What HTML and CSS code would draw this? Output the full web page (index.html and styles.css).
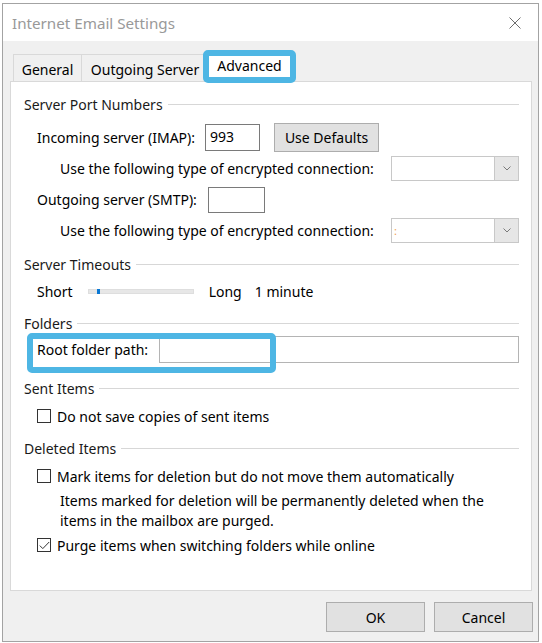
FILE: index.html
```html
<!DOCTYPE html>
<html lang="en">
<head>
    <meta charset="UTF-8">
    <title>Internet Email Settings</title>
    <link rel="stylesheet" href="styles.css">
</head>
<body>
    <div class="dialog">
        <!-- Title bar -->
        <div class="titlebar">
            <span class="title">Internet Email Settings</span>
            <svg class="close" width="12" height="12" viewBox="0 0 12 12">
                <path d="M0.5 0.5 L11.5 11.5 M11.5 0.5 L0.5 11.5" stroke="#6e6e6e" stroke-width="1" fill="none"/>
            </svg>
        </div>

        <!-- Tabs -->
        <div class="tabs">
            <div class="tab tab-general">General</div>
            <div class="tab tab-outgoing">Outgoing Server</div>
            <div class="tab tab-advanced active">Advanced<span class="callout"></span></div>
        </div>

        <div class="panel">
            <div class="group ports">
                <div class="group-title">Server Port Numbers</div>
                <div class="row">
                    <span>Incoming server (IMAP):</span>
                    <div class="text-input port-in">993</div>
                    <div class="btn btn-defaults">Use Defaults</div>
                </div>
                <div class="row sub">
                    <span>Use the following type of encrypted connection:</span>
                    <div class="combo"><span class="combo-value"></span><span class="combo-arrow"><svg width="8" height="5" viewBox="0 0 8 5"><path d="M0.5 0.5 L4 4 L7.5 0.5" stroke="#7a7a7a" fill="none"/></svg></span></div>
                </div>
                <div class="row">
                    <span>Outgoing server (SMTP):</span>
                    <div class="text-input port-out"></div>
                </div>
                <div class="row sub">
                    <span>Use the following type of encrypted connection:</span>
                    <div class="combo"><span class="combo-value"><span class="caret-mark">:</span></span><span class="combo-arrow"><svg width="8" height="5" viewBox="0 0 8 5"><path d="M0.5 0.5 L4 4 L7.5 0.5" stroke="#7a7a7a" fill="none"/></svg></span></div>
                </div>
            </div>

            <div class="group">
                <div class="group-title">Server Timeouts</div>
                <div class="row timeout-row">
                    <span>Short</span>
                    <div class="slider"><span class="slider-thumb"></span></div>
                    <span>Long</span>
                    <span class="timeout-value">1 minute</span>
                </div>
            </div>

            <div class="group">
                <div class="group-title">Folders</div>
                <div class="row root-row">
                    <span>Root folder path:</span>
                    <div class="text-input root-input"></div>
                    <span class="callout root-callout"></span>
                </div>
            </div>

            <div class="group sent">
                <div class="group-title">Sent Items</div>
                <label class="row check-row">
                    <span class="checkbox"></span>
                    <span>Do not save copies of sent items</span>
                </label>
            </div>

            <div class="group">
                <div class="group-title">Deleted Items</div>
                <label class="row check-row">
                    <span class="checkbox"></span>
                    <span>Mark items for deletion but do not move them automatically</span>
                </label>
                <p class="note">Items marked for deletion will be permanently deleted when the<br>items in the mailbox are purged.</p>
                <label class="row check-row">
                    <span class="checkbox checked"><svg width="11" height="9" viewBox="0 0 11 9"><path d="M0.8 4.6 L3.8 7.6 L10.2 1" stroke="#333" stroke-width="1" fill="none"/></svg></span>
                    <span>Purge items when switching folders while online</span>
                </label>
            </div>
        </div>

        <!-- Footer buttons -->
        <div class="footer">
            <div class="btn btn-footer">OK</div>
            <div class="btn btn-footer">Cancel</div>
        </div>
    </div>
</body>
</html>
```
FILE: styles.css
```css
* {margin: 0; padding: 0; box-sizing: border-box;}
body {font-family: "Noto Sans", sans-serif; font-size: 14px; color: #000; background: #fff;}

/* Dialog frame */
.dialog {margin: 3px 0 0 2px; width: 537px; height: 639px; border: 1px solid #a3a3a3; background: #f0f0f0; display: flex; flex-direction: column;}
.titlebar {height: 37px; flex-shrink: 0; background: #fff; display: flex; align-items: center; justify-content: space-between; padding: 0 17px 0 9px;}
.title {font-size: 15.2px; color: #999;}

/* Tabs */
.tabs {display: flex; align-items: flex-end; height: 27px; margin: 13px 0 0 10px; position: relative; z-index: 1;}
.tab {height: 27px; display: flex; align-items: center; justify-content: center; padding-top: 2px; border: 1px solid #d9d9d9; border-bottom: none; background: #f0f0f0; color: #000;}
.tab + .tab {border-left: none;}
.tab-general {width: 69px;}
.tab-outgoing {width: 127px;}
.tab-advanced {width: 82px; height: 30px; margin-bottom: -1px; padding: 0 0 4px 0; background: #fff; position: relative;}
.callout {position: absolute; border: 6px solid #4eb6e4; border-radius: 5px; pointer-events: none;}
.tab-advanced .callout {top: -3px; left: -6px; right: -6px; bottom: -1px;}

/* Tab panel */
.panel {height: 510px; flex-shrink: 0; margin: 0 6px 0 7px; background: #fff; border: 1px solid #d9d9d9; padding: 10px 12px 0 13px;}
.group + .group {margin-top: 6px;}
.group.sent {margin-top: 9px;}
.group-title {height: 24px; display: flex; align-items: center; gap: 5px; color: #1a1a1a;}
.group-title::after {content: ""; flex: 1; height: 1px; background: #d7d7d7;}
.row {height: 28px; margin-top: 2px; display: flex; align-items: center; padding-left: 13px;}
.row.sub {padding-left: 36px;}
.ports .row {height: 31px; margin-top: 0;}
.ports .group-title + .row {margin-top: 6px;}

/* Controls */
.text-input {height: 27px; border: 1px solid #7a7a7a; background: #fff; padding: 3px 4px 0 4px; line-height: 18px;}
.port-in {width: 55px; margin-left: 10px;}
.port-out {width: 57px; height: 26px; margin-left: 11px;}
.btn {background: #e1e1e1; border: 1px solid #adadad; display: flex; align-items: center; justify-content: center;}
.btn-defaults {width: 105px; height: 29px; margin-left: 14px;}
.combo {width: 128px; height: 25px; margin-left: auto; display: flex; border: 1px solid #c8c8c8; background: #fff;}
.combo-value {flex: 1; padding-left: 2px; display: flex; align-items: center;}
.caret-mark {color: #f0a050; font-size: 11px; line-height: 1;}
.combo-arrow {width: 24px; background: #e6e6e6; border-left: 1px solid #c8c8c8; display: flex; align-items: center; justify-content: center;}

.timeout-row {gap: 15px; margin-top: 1px;}
.timeout-value {margin-left: -2px;}
.slider {width: 106px; height: 5px; background: #e7e7e7; border: 1px solid #dedede; position: relative;}
.slider-thumb {position: absolute; left: 8px; top: -1px; width: 3px; height: 5px; background: #0a78d4;}

.root-row {height: 32px; margin-top: 0; padding-bottom: 3px; position: relative;}
.root-input {flex: 1; height: 27px; margin-left: 11px; border-color: #b4b4b4;}
.root-callout {top: -2px; left: 3px; width: 249px; bottom: -6px;}

.check-row {gap: 6px;}
.checkbox {width: 14px; height: 14px; border: 1px solid #333; background: #fff; display: flex; align-items: center; justify-content: center;}
.note {padding-left: 36px; margin-top: 1px; line-height: 20px;}
.note + .row {margin-top: 0;}

/* Footer */
.footer {display: flex; justify-content: flex-end; gap: 9px; padding: 11px 5px 0 0;}
.btn-footer {width: 99px; height: 30px;}
```
